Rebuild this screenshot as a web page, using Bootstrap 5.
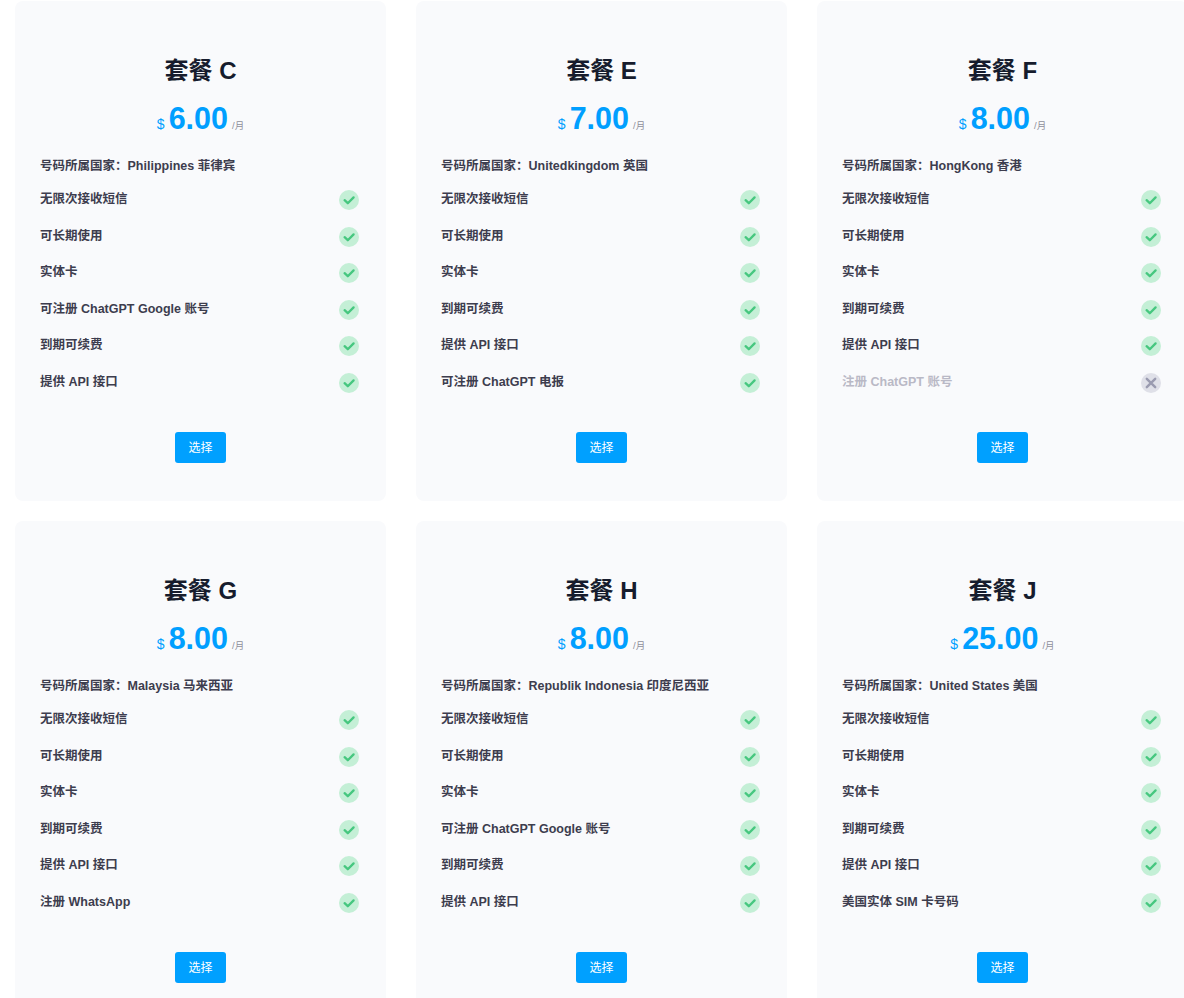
<!DOCTYPE html>
<html lang="zh">
<head>
<meta charset="utf-8">
<title>套餐</title>
<link href="https://cdn.jsdelivr.net/npm/bootstrap@5.3.0/dist/css/bootstrap.min.css" rel="stylesheet">
<style>
html,body{overflow:hidden;height:998px;background:#fff}
body{font-family:"Liberation Sans","Noto Sans CJK SC",sans-serif}
.plan-grid{display:grid;grid-template-columns:repeat(3,371px);gap:20px 30px;padding:1px 0 0 15px;width:1250px}
.plan-box{height:500px;background:#f9fafc;border-radius:8px;padding:53px 26px 0;text-align:center}
.plan-name{font-size:24px;font-weight:700;line-height:34px;color:#161c2d;margin:0}
.plan-price{height:38px;margin-top:11px;line-height:38px;color:#009fff;white-space:nowrap}
.plan-cur{font-size:14px;font-weight:400;margin-right:4px}
.plan-num{font-size:30.5px;font-weight:700}
.plan-per{font-size:9.5px;color:#8f8f9b;margin-left:4px}
.plan-list{list-style:none;margin:0 1px 0 -1px;padding:0;text-align:left;font-size:12.5px;font-weight:700;color:#3d3d4e}
.plan-country{height:18px;line-height:18px;margin-top:20px;margin-bottom:14px;white-space:nowrap}
.plan-item{height:36.5px;padding-top:1px}
.plan-item span{line-height:18px}
.plan-off{color:#b9b9c6}
.plan-ico{width:20px;height:20px;flex:none;margin-top:0}
.plan-btn{width:51px;height:31px;padding:2px 0 0;font-size:12px;line-height:29px;background:#00a0ff;border:0;border-radius:3px;color:#fff;margin-top:24px}
</style>
</head>
<body>
<svg width="0" height="0" class="d-block" aria-hidden="true">
<symbol id="ok" viewBox="0 0 20 20"><circle cx="10" cy="10" r="10" fill="#c4efd6"/><path d="M5.6 10.2l3.2 3 5.8-5.8" fill="none" stroke="#46c77f" stroke-width="2.3" stroke-linecap="round" stroke-linejoin="round"/></symbol>
<symbol id="no" viewBox="0 0 20 20"><circle cx="10" cy="10" r="10" fill="#dfe0e8"/><path d="M5.8 5.8l8.4 8.4M14.2 5.8l-8.4 8.4" fill="none" stroke="#9a9bb0" stroke-width="2.4" stroke-linecap="round"/></symbol>
</svg>
<div class="plan-grid">

<div class="plan-box">
<h3 class="plan-name">套餐 C</h3>
<div class="plan-price"><span class="plan-cur">$</span><span class="plan-num">6.00</span><span class="plan-per">/月</span></div>
<ul class="plan-list">
<li class="plan-country">号码所属国家：Philippines 菲律宾</li>
<li class="plan-item d-flex justify-content-between"><span>无限次接收短信</span><svg class="plan-ico"><use href="#ok"/></svg></li>
<li class="plan-item d-flex justify-content-between"><span>可长期使用</span><svg class="plan-ico"><use href="#ok"/></svg></li>
<li class="plan-item d-flex justify-content-between"><span>实体卡</span><svg class="plan-ico"><use href="#ok"/></svg></li>
<li class="plan-item d-flex justify-content-between"><span>可注册 ChatGPT Google 账号</span><svg class="plan-ico"><use href="#ok"/></svg></li>
<li class="plan-item d-flex justify-content-between"><span>到期可续费</span><svg class="plan-ico"><use href="#ok"/></svg></li>
<li class="plan-item d-flex justify-content-between"><span>提供 API 接口</span><svg class="plan-ico"><use href="#ok"/></svg></li>
</ul>
<button type="button" class="btn plan-btn">选择</button>
</div>

<div class="plan-box">
<h3 class="plan-name">套餐 E</h3>
<div class="plan-price"><span class="plan-cur">$</span><span class="plan-num">7.00</span><span class="plan-per">/月</span></div>
<ul class="plan-list">
<li class="plan-country">号码所属国家：Unitedkingdom 英国</li>
<li class="plan-item d-flex justify-content-between"><span>无限次接收短信</span><svg class="plan-ico"><use href="#ok"/></svg></li>
<li class="plan-item d-flex justify-content-between"><span>可长期使用</span><svg class="plan-ico"><use href="#ok"/></svg></li>
<li class="plan-item d-flex justify-content-between"><span>实体卡</span><svg class="plan-ico"><use href="#ok"/></svg></li>
<li class="plan-item d-flex justify-content-between"><span>到期可续费</span><svg class="plan-ico"><use href="#ok"/></svg></li>
<li class="plan-item d-flex justify-content-between"><span>提供 API 接口</span><svg class="plan-ico"><use href="#ok"/></svg></li>
<li class="plan-item d-flex justify-content-between"><span>可注册 ChatGPT 电报</span><svg class="plan-ico"><use href="#ok"/></svg></li>
</ul>
<button type="button" class="btn plan-btn">选择</button>
</div>

<div class="plan-box">
<h3 class="plan-name">套餐 F</h3>
<div class="plan-price"><span class="plan-cur">$</span><span class="plan-num">8.00</span><span class="plan-per">/月</span></div>
<ul class="plan-list">
<li class="plan-country">号码所属国家：HongKong 香港</li>
<li class="plan-item d-flex justify-content-between"><span>无限次接收短信</span><svg class="plan-ico"><use href="#ok"/></svg></li>
<li class="plan-item d-flex justify-content-between"><span>可长期使用</span><svg class="plan-ico"><use href="#ok"/></svg></li>
<li class="plan-item d-flex justify-content-between"><span>实体卡</span><svg class="plan-ico"><use href="#ok"/></svg></li>
<li class="plan-item d-flex justify-content-between"><span>到期可续费</span><svg class="plan-ico"><use href="#ok"/></svg></li>
<li class="plan-item d-flex justify-content-between"><span>提供 API 接口</span><svg class="plan-ico"><use href="#ok"/></svg></li>
<li class="plan-item plan-off d-flex justify-content-between"><span>注册 ChatGPT 账号</span><svg class="plan-ico"><use href="#no"/></svg></li>
</ul>
<button type="button" class="btn plan-btn">选择</button>
</div>

<div class="plan-box">
<h3 class="plan-name">套餐 G</h3>
<div class="plan-price"><span class="plan-cur">$</span><span class="plan-num">8.00</span><span class="plan-per">/月</span></div>
<ul class="plan-list">
<li class="plan-country">号码所属国家：Malaysia 马来西亚</li>
<li class="plan-item d-flex justify-content-between"><span>无限次接收短信</span><svg class="plan-ico"><use href="#ok"/></svg></li>
<li class="plan-item d-flex justify-content-between"><span>可长期使用</span><svg class="plan-ico"><use href="#ok"/></svg></li>
<li class="plan-item d-flex justify-content-between"><span>实体卡</span><svg class="plan-ico"><use href="#ok"/></svg></li>
<li class="plan-item d-flex justify-content-between"><span>到期可续费</span><svg class="plan-ico"><use href="#ok"/></svg></li>
<li class="plan-item d-flex justify-content-between"><span>提供 API 接口</span><svg class="plan-ico"><use href="#ok"/></svg></li>
<li class="plan-item d-flex justify-content-between"><span>注册 WhatsApp</span><svg class="plan-ico"><use href="#ok"/></svg></li>
</ul>
<button type="button" class="btn plan-btn">选择</button>
</div>

<div class="plan-box">
<h3 class="plan-name">套餐 H</h3>
<div class="plan-price"><span class="plan-cur">$</span><span class="plan-num">8.00</span><span class="plan-per">/月</span></div>
<ul class="plan-list">
<li class="plan-country">号码所属国家：Republik Indonesia 印度尼西亚</li>
<li class="plan-item d-flex justify-content-between"><span>无限次接收短信</span><svg class="plan-ico"><use href="#ok"/></svg></li>
<li class="plan-item d-flex justify-content-between"><span>可长期使用</span><svg class="plan-ico"><use href="#ok"/></svg></li>
<li class="plan-item d-flex justify-content-between"><span>实体卡</span><svg class="plan-ico"><use href="#ok"/></svg></li>
<li class="plan-item d-flex justify-content-between"><span>可注册 ChatGPT Google 账号</span><svg class="plan-ico"><use href="#ok"/></svg></li>
<li class="plan-item d-flex justify-content-between"><span>到期可续费</span><svg class="plan-ico"><use href="#ok"/></svg></li>
<li class="plan-item d-flex justify-content-between"><span>提供 API 接口</span><svg class="plan-ico"><use href="#ok"/></svg></li>
</ul>
<button type="button" class="btn plan-btn">选择</button>
</div>

<div class="plan-box">
<h3 class="plan-name">套餐 J</h3>
<div class="plan-price"><span class="plan-cur">$</span><span class="plan-num">25.00</span><span class="plan-per">/月</span></div>
<ul class="plan-list">
<li class="plan-country">号码所属国家：United States 美国</li>
<li class="plan-item d-flex justify-content-between"><span>无限次接收短信</span><svg class="plan-ico"><use href="#ok"/></svg></li>
<li class="plan-item d-flex justify-content-between"><span>可长期使用</span><svg class="plan-ico"><use href="#ok"/></svg></li>
<li class="plan-item d-flex justify-content-between"><span>实体卡</span><svg class="plan-ico"><use href="#ok"/></svg></li>
<li class="plan-item d-flex justify-content-between"><span>到期可续费</span><svg class="plan-ico"><use href="#ok"/></svg></li>
<li class="plan-item d-flex justify-content-between"><span>提供 API 接口</span><svg class="plan-ico"><use href="#ok"/></svg></li>
<li class="plan-item d-flex justify-content-between"><span>美国实体 SIM 卡号码</span><svg class="plan-ico"><use href="#ok"/></svg></li>
</ul>
<button type="button" class="btn plan-btn">选择</button>
</div>

</div>
<script src="https://cdn.jsdelivr.net/npm/bootstrap@5.3.0/dist/js/bootstrap.bundle.min.js"></script>
</body>
</html>
